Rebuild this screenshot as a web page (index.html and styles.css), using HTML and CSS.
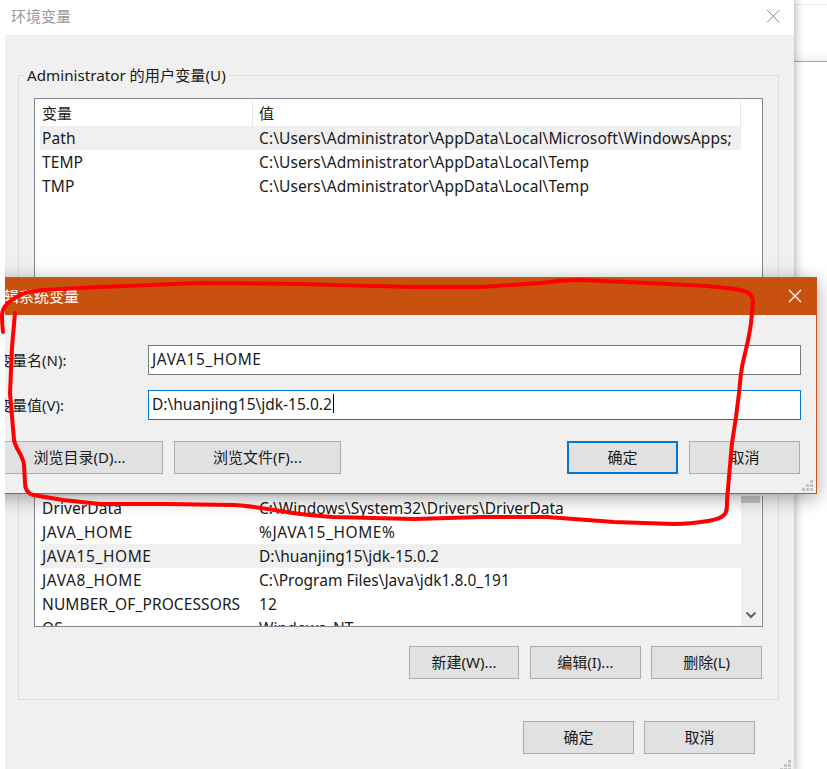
FILE: index.html
```html
<!DOCTYPE html>
<html lang="zh-CN">
<head>
<meta charset="utf-8">
<title>环境变量</title>
<link rel="stylesheet" href="styles.css">
</head>
<body>
<div class="desktop">
  <div class="back-window"></div>
  <div class="clip">
    <section class="window env">
      <header class="env-title">
        <span class="env-title-text">环境变量</span>
        <svg class="env-close" width="14" height="14" viewBox="0 0 14 14"><path d="M1 1L13.5 13.5M13.5 1L1 13.5"/></svg>
      </header>
      <div class="env-body">
        <fieldset class="group group-user">
          <legend>Administrator 的用户变量(U)</legend>
          <div class="list list-user">
            <div class="rows">
              <div class="row head"><span class="name">变量</span><span class="value">值</span></div>
              <div class="row selected"><span class="name">Path</span><span class="value">C:\Users\Administrator\AppData\Local\Microsoft\WindowsApps;</span></div>
              <div class="row"><span class="name">TEMP</span><span class="value">C:\Users\Administrator\AppData\Local\Temp</span></div>
              <div class="row"><span class="name">TMP</span><span class="value">C:\Users\Administrator\AppData\Local\Temp</span></div>
            </div>
          </div>
        </fieldset>
        <div class="group group-system">
          <div class="list list-system">
            <div class="rows">
              <div class="row"><span class="name">DriverData</span><span class="value tight">C:\Windows\System32\Drivers\DriverData</span></div>
              <div class="row"><span class="name caps">JAVA_HOME</span><span class="value caps">%JAVA15_HOME%</span></div>
              <div class="row selected"><span class="name caps">JAVA15_HOME</span><span class="value tight">D:\huanjing15\jdk-15.0.2</span></div>
              <div class="row"><span class="name caps">JAVA8_HOME</span><span class="value tight">C:\Program Files\Java\jdk1.8.0_191</span></div>
              <div class="row"><span class="name">NUMBER_OF_PROCESSORS</span><span class="value">12</span></div>
              <div class="row"><span class="name">OS</span><span class="value">Windows_NT</span></div>
            </div>
            <div class="scrollbar">
              <div class="thumb"></div>
              <svg class="chevron" width="12" height="8" viewBox="0 0 12 8"><path d="M1.5 1.5L6 6L10.5 1.5"/></svg>
            </div>
          </div>
          <div class="btn-row list-actions">
            <button class="btn">新建(W)...</button>
            <button class="btn">编辑(I)...</button>
            <button class="btn">删除(L)</button>
          </div>
        </div>
        <div class="btn-row env-actions">
          <button class="btn">确定</button>
          <button class="btn">取消</button>
        </div>
      </div>
      <svg class="grip grip-env" width="12" height="12" viewBox="0 0 12 12"><path d="M8 0h3v3H8zM4 4h3v3H4zM8 4h3v3H8zM0 8h3v3H0zM4 8h3v3H4zM8 8h3v3H8z"/></svg>
    </section>

    <section class="window dialog">
      <header class="dialog-title">
        <span class="dialog-title-text">编辑系统变量</span>
        <svg class="dialog-close" width="14" height="14" viewBox="0 0 14 14"><path d="M1 1L13 13M13 1L1 13"/></svg>
      </header>
      <div class="dialog-body">
        <div class="form">
          <label class="form-label">变量名(N):</label>
          <div class="field caps">JAVA15_HOME</div>
          <label class="form-label">变量值(V):</label>
          <div class="field focused">D:\huanjing15\jdk-15.0.2<span class="caret"></span></div>
        </div>
        <div class="dialog-actions">
          <div class="btn-row">
            <button class="btn wide">浏览目录(D)...</button>
            <button class="btn wide">浏览文件(F)...</button>
          </div>
          <div class="btn-row">
            <button class="btn default">确定</button>
            <button class="btn">取消</button>
          </div>
        </div>
      </div>
      <svg class="grip grip-dialog" width="12" height="12" viewBox="0 0 12 12"><path d="M8 0h3v3H8zM4 4h3v3H4zM8 4h3v3H8zM0 8h3v3H0zM4 8h3v3H4zM8 8h3v3H8z"/></svg>
    </section>
  </div>

  <svg class="scribble" width="827" height="769" viewBox="0 0 827 769">
    <path d="M3 332C2 322 1 314 3 310C5 304 14 298 22 294C28 291 36 291 43 290L100 287L200 283L300 284L413 287L481 287L541 283C555 281 568 280 581 280L647 283L707 286C722 288 738 288 747 292C752 295 753 298 753 302L751 323C749 340 745 352 742 367C740 378 740 385 739 393L736 417L732 443L729 477L727 500C727 508 727 512 724 515C720 519 714 520 708 521C696 523 685 524 674 524L614 522L547 517L481 517L414 519L333 517C318 516 305 515 293 513C275 510 255 506 233 505L167 504L100 504L63 500L33 495C27 493 25 489 25 483L24 465C23 455 16 450 14 440L10 393L12 347L15 313"/>
  </svg>
</div>
</body>
</html>
```
FILE: styles.css
```css
* { box-sizing: border-box; }

html, body {
  margin: 0;
  background: #fff;
  overflow: hidden;
}

.desktop {
  position: relative;
  width: 827px;
  height: 769px;
  overflow: hidden;
  font-family: "Noto Sans", "Noto Sans CJK SC", sans-serif;
  font-size: 15px;
  color: #1a1a1a;
}

.back-window {
  position: absolute;
  left: 780px;
  top: 4px;
  width: 47px;
  height: 58px;
  background: linear-gradient(#fff 85%, #f2f2f2);
  border-top: 1px solid #ececec;
  border-bottom: 1px solid #a6a6a6;
}

.clip {
  position: absolute;
  left: 5px;
  top: 0;
  right: 0;
  bottom: 0;
  overflow: hidden;
}

.window { position: absolute; }

/* Outer window */
.env {
  left: 0;
  top: -2px;
  width: 789px;
  height: 776px;
  background: #fff;
  box-shadow: 0 0 10px rgba(0, 0, 0, .38);
}

.env-title {
  display: flex;
  align-items: center;
  justify-content: space-between;
  height: 37px;
  padding: 0 14px 2px 6px;
  color: #9a9a9a;
}

.env-close path { stroke: #8c8c8c; stroke-width: 1; fill: none; }

.env-body {
  display: flex;
  flex-direction: column;
  height: 739px;
  padding: 30px 15px 0 13px;
  background: #f0f0f0;
}

.group {
  margin: 0;
  border: 1px solid #dcdcdc;
}

.group legend {
  margin-left: -10px;
  padding: 0 3px;
  line-height: 20px;
  font-size: 15.2px;
  color: #1a1a1a;
}

.group-user {
  height: 410px;
  padding: 13px 15px 0;
  border-bottom: 0;
}

.group-system {
  height: 225px;
  padding: 21px 15px 0;
  border-top: 0;
}

.list {
  display: flex;
  background: #fff;
  border: 1px solid #828790;
  overflow: hidden;
}

.list-user { height: 350px; }

.list-system {
  height: 131px;
  border-top: 0;
}

.rows {
  width: 706px;
  padding-left: 5px;
}

.row {
  display: flex;
  align-items: center;
  height: 24px;
  padding-bottom: 1px;
  font-size: 15.5px;
  letter-spacing: .1px;
  white-space: nowrap;
}

.row.selected { background: #f0f0f0; }

.row.head {
  height: 27px;
  padding: 2px 0 0;
  font-size: 15px;
  letter-spacing: 0;
}

.name {
  flex: none;
  width: 219px;
  padding-left: 2px;
}

.value { flex: none; }

.caps { letter-spacing: .6px; }

.tight { letter-spacing: 0; }

.head .name {
  height: 26px;
  line-height: 24px;
  border-right: 1px solid #e5e5e5;
  width: 213px;
}

.head .value {
  flex: 1;
  height: 26px;
  line-height: 24px;
  padding-left: 6px;
  border-right: 1px solid #e5e5e5;
}

.scrollbar {
  position: relative;
  width: 20px;
  background: #f0f0f0;
}

.thumb {
  height: 7px;
  margin: 0 1px 0 0;
  background: #c4c4c4;
}

.chevron {
  position: absolute;
  left: 4px;
  bottom: 7px;
}

.chevron path { stroke: #606060; stroke-width: 2; fill: none; }

.btn-row {
  display: flex;
  gap: 11px;
}

.btn {
  width: 111px;
  height: 33px;
  padding: 0 0 2px;
  font: inherit;
  color: #1a1a1a;
  background: #e1e1e1;
  border: 1px solid #adadad;
  border-radius: 0;
}

.btn.wide { width: 167px; }

.btn.default { border: 2px solid #0078d7; }

.list-actions {
  justify-content: flex-end;
  gap: 10.67px;
  margin-top: 19px;
  margin-right: 1px;
}

.list-actions .btn { width: 110.67px; }

.env-actions {
  justify-content: flex-end;
  gap: 10px;
  margin-top: 21px;
  padding-right: 24px;
}

.grip {
  position: absolute;
  fill: #c4c4c4;
}

.grip-env { right: 2px; bottom: 2px; }

/* Edit dialog */
.dialog {
  left: -22px;
  top: 277px;
  width: 834px;
  height: 217px;
  background: #f0f0f0;
  border: 1px solid #c8551a;
  box-shadow: 0 4px 18px rgba(0, 0, 0, .35);
}

.dialog-title {
  display: flex;
  align-items: center;
  justify-content: space-between;
  height: 37px;
  padding: 0 14px 2px 5px;
  color: #fff;
  background: #c8510f;
}

.dialog-close path { stroke: #fff; stroke-width: 1.2; fill: none; }

.dialog-body {
  padding: 30px 15px 0 8px;
}

.form {
  display: grid;
  grid-template-columns: 156px 1fr;
  row-gap: 15px;
  align-items: center;
}

.form-label {
  margin-left: 5px;
  padding-bottom: 2px;
  white-space: nowrap;
}

.field {
  display: flex;
  align-items: center;
  height: 30px;
  padding: 0 3px 3px;
  font-size: 15.5px;
  background: #fff;
  border: 1px solid #7a7a7a;
}

.field.focused { border-color: #0078d7; }

.caret {
  width: 1px;
  height: 19px;
  margin-left: 1px;
  background: #000;
}

.dialog-actions {
  display: flex;
  justify-content: space-between;
  margin-top: 21px;
  padding: 0 1px 0 4px;
}

.grip-dialog { right: 2px; bottom: 1px; }

.scribble {
  position: absolute;
  left: 0;
  top: 0;
  pointer-events: none;
}

.scribble path {
  fill: none;
  stroke: #f00;
  stroke-width: 4;
  stroke-linecap: round;
  stroke-linejoin: round;
}
```
